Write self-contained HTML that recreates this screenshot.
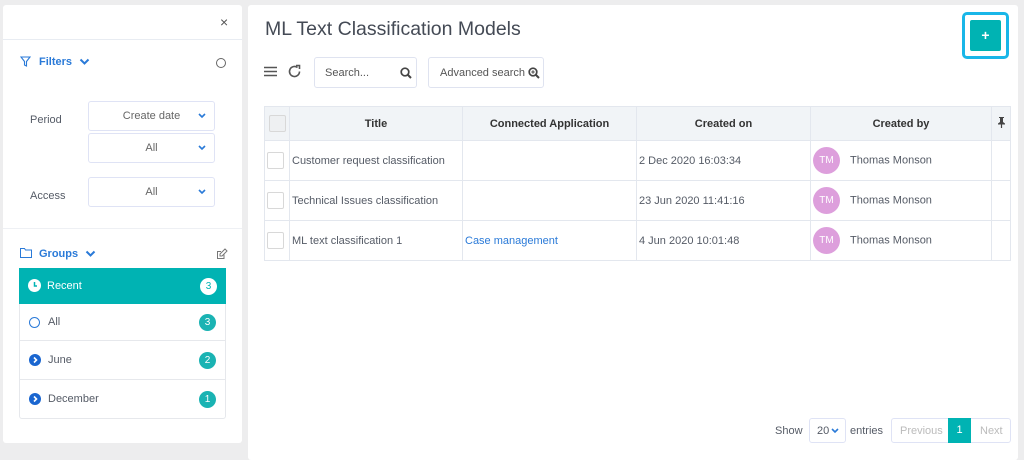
<!DOCTYPE html>
<html><head><style>
*{box-sizing:border-box;margin:0;padding:0}
body{width:1024px;height:455px;background:#ededee;font-family:"Liberation Sans",sans-serif;font-size:11px;color:#555b66;position:relative;overflow:hidden}
.a{position:absolute}
.side{left:3px;top:5px;width:239px;height:438px;background:#fff;border-radius:3px}
.main{left:248px;top:5px;width:770px;height:455px;background:#fff;border-radius:3px}
.sel{position:absolute;border:1px solid #dfe3f5;border-radius:3px;text-align:center;line-height:29px;color:#666}
.chev{position:absolute;right:8px;top:11px}
.blue{color:#2a7ad8;font-weight:bold}
.li{position:absolute;left:19px;width:207px;border:1px solid #e6e8ec;border-top:none;font-size:11px}
.badge{position:absolute;right:9px;width:17px;height:17px;border-radius:50%;background:#1ab3b3;color:#fff;text-align:center;line-height:17px;font-size:10px}
table{position:absolute;left:264px;top:106px;border-collapse:collapse;font-size:11px}
td,th{border:1px solid #e3e7ee;height:40px;padding:0 2px}
th{background:#f1f4f7;height:34px;color:#333;font-weight:bold}
.cb{display:inline-block;width:17px;height:17px;border:1px solid #d8d8d8;border-radius:2px;vertical-align:middle;background:#fff}
.av{display:inline-block;width:27px;height:27px;border-radius:50%;background:#dd9fdc;color:#fff;text-align:center;line-height:28px;font-size:10px;vertical-align:middle;margin-right:10px}
</style></head><body>
<div class="a side"></div>
<div class="a main"></div>
<div class="a" style="left:3px;top:39px;width:239px;border-top:1px solid #e8ecf2"></div>
<div class="a" style="left:220px;top:14px;font-size:14px;color:#555">×</div>
<svg class="a" style="left:20px;top:56px" width="11" height="11" viewBox="0 0 11 11"><path d="M1 1h9L6.5 5.5V10L4.5 9V5.5Z" fill="none" stroke="#2a7ad8" stroke-width="1.1"/></svg>
<div class="a blue" style="left:39px;top:56px">Filters</div>
<svg class="a" style="left:79px;top:58px" width="11" height="8"><path d="M1.5 1.5l4 4 4-4" fill="none" stroke="#2a7ad8" stroke-width="2"/></svg>
<div class="a" style="left:216px;top:58px;width:10px;height:10px;border:1px solid #666;border-radius:50%"></div>
<div class="a" style="left:30px;top:114px">Period</div>
<div class="sel" style="left:88px;top:101px;width:127px;height:30px">Create date<svg class="chev" width="8" height="6"><path d="M1 1l3 3 3-3" fill="none" stroke="#2a7ad8" stroke-width="1.6"/></svg></div>
<div class="sel" style="left:88px;top:133px;width:127px;height:30px">All<svg class="chev" width="8" height="6"><path d="M1 1l3 3 3-3" fill="none" stroke="#2a7ad8" stroke-width="1.6"/></svg></div>
<div class="a" style="left:30px;top:190px">Access</div>
<div class="sel" style="left:88px;top:177px;width:127px;height:30px">All<svg class="chev" width="8" height="6"><path d="M1 1l3 3 3-3" fill="none" stroke="#2a7ad8" stroke-width="1.6"/></svg></div>
<div class="a" style="left:3px;top:228px;width:239px;border-top:1px solid #eef0f4"></div>
<svg class="a" style="left:20px;top:248px" width="12" height="10"><path d="M.5 .5h4l1 1.5h6v7.5H.5Z" fill="none" stroke="#2a7ad8"/></svg>
<div class="a blue" style="left:39px;top:248px">Groups</div>
<svg class="a" style="left:85px;top:250px" width="11" height="8"><path d="M1.5 1.5l4 4 4-4" fill="none" stroke="#2a7ad8" stroke-width="2"/></svg>
<svg class="a" style="left:216px;top:248px" width="12" height="12"><path d="M9 1l2 2-5 5H4V6Z M8 6.5V10.5H1.5V3.5H5" fill="none" stroke="#777"/></svg>
<div class="li" style="top:268px;height:36px;background:#00b3b3;border:none;color:#fff"><span class="a" style="left:9px;top:11px;width:13px;height:13px;border-radius:50%;background:#fff"></span><svg class="a" style="left:9px;top:11px" width="13" height="13"><path d="M6.5 3v4h2.5" stroke="#00b3b3" stroke-width="1.5" fill="none"/></svg><span class="a" style="left:28px;top:12px">Recent</span><span class="badge" style="top:10px;background:#fff;color:#00b3b3">3</span></div>
<div class="li" style="top:304px;height:37px"><span class="a" style="left:9px;top:13px;width:11px;height:11px;border:1.5px solid #2a7ad8;border-radius:50%"></span><span class="a" style="left:28px;top:12px">All</span><span class="badge" style="top:10px">3</span></div>
<div class="li" style="top:341px;height:39px"><svg class="a" style="left:9px;top:13px" width="12" height="12"><circle cx="6" cy="6" r="6" fill="#1a66d0"/><path d="M5 3.5l2.5 2.5L5 8.5" fill="none" stroke="#fff" stroke-width="1.6"/></svg><span class="a" style="left:28px;top:13px">June</span><span class="badge" style="top:11px">2</span></div>
<div class="li" style="top:380px;height:39px;border-radius:0 0 3px 3px"><svg class="a" style="left:9px;top:13px" width="12" height="12"><circle cx="6" cy="6" r="6" fill="#1a66d0"/><path d="M5 3.5l2.5 2.5L5 8.5" fill="none" stroke="#fff" stroke-width="1.6"/></svg><span class="a" style="left:28px;top:13px">December</span><span class="badge" style="top:11px">1</span></div>

<div class="a" style="left:265px;top:18px;font-size:19.5px;color:#444a55">ML Text Classification Models</div>
<div class="a" style="left:962px;top:12px;width:47px;height:47px;border:3px solid #19b6e8;border-radius:5px"></div>
<div class="a" style="left:970px;top:20px;width:31px;height:31px;background:#00b3b3;border-radius:2px;color:#fff;text-align:center;line-height:31px;font-weight:bold;font-size:14px">+</div>
<svg class="a" style="left:264px;top:66px" width="13" height="11"><path d="M0 1.5h13M0 5.5h13M0 9.5h13" stroke="#555" stroke-width="1.6"/></svg>
<svg class="a" style="left:287px;top:64px" width="15" height="15"><path d="M12.5 7.5A5 5 0 1 1 10.5 3.5" fill="none" stroke="#555" stroke-width="1.6"/><path d="M9 1.5h3.5V5" fill="none" stroke="#555" stroke-width="1.6"/></svg>
<div class="a" style="left:314px;top:57px;width:103px;height:31px;border:1px solid #dfe3f0;border-radius:3px"><span class="a" style="left:10px;top:9px;color:#555">Search...</span><svg class="a" style="left:85px;top:9px" width="12" height="12"><circle cx="5" cy="5" r="3.8" fill="none" stroke="#444" stroke-width="1.7"/><path d="M8 8l3 3" stroke="#444" stroke-width="2"/></svg></div>
<div class="a" style="left:428px;top:57px;width:116px;height:31px;border:1px solid #dfe3f0;border-radius:3px"><span class="a" style="left:11px;top:9px;color:#555">Advanced search</span><svg class="a" style="left:99px;top:9px" width="12" height="12"><circle cx="5" cy="5" r="3.8" fill="none" stroke="#444" stroke-width="1.7"/><path d="M8 8l3 3" stroke="#444" stroke-width="2"/><path d="M3.3 5h3.4M5 3.3v3.4" stroke="#444"/></svg></div>

<table>
<tr><th style="width:25px"><span class="cb" style="background:#eef0f2"></span></th><th style="width:173px">Title</th><th style="width:174px">Connected Application</th><th style="width:174px">Created on</th><th style="width:181px">Created by</th><th style="width:19px"><svg width="9" height="11"><path d="M2 0h5v1H6v4l2 1.5v1H1v-1L3 5V1H2Z" fill="#444"/><path d="M4.5 7.5V11" stroke="#444" stroke-width="1.2"/></svg></th></tr>
<tr><td><span class="cb"></span></td><td>Customer request classification</td><td></td><td>2 Dec 2020 16:03:34</td><td><span class="av">TM</span>Thomas Monson</td><td></td></tr>
<tr><td><span class="cb"></span></td><td>Technical Issues classification</td><td></td><td>23 Jun 2020 11:41:16</td><td><span class="av">TM</span>Thomas Monson</td><td></td></tr>
<tr><td><span class="cb"></span></td><td>ML text classification 1</td><td style="color:#2a7ad8">Case management</td><td>4 Jun 2020 10:01:48</td><td><span class="av">TM</span>Thomas Monson</td><td></td></tr>
</table>

<div class="a" style="left:775px;top:425px">Show</div>
<div class="a" style="left:809px;top:418px;width:37px;height:25px;border:1px solid #dfe3f5;border-radius:3px;line-height:24px;padding-left:7px">20<svg style="margin-left:2px" width="8" height="6"><path d="M1 1l3 3 3-3" fill="none" stroke="#2a7ad8" stroke-width="1.6"/></svg></div>
<div class="a" style="left:850px;top:425px">entries</div>
<div class="a" style="left:891px;top:418px;width:120px;height:25px;border:1px solid #dfe3f5;border-radius:3px"></div>
<div class="a" style="left:900px;top:425px;color:#bbb">Previous</div>
<div class="a" style="left:948px;top:418px;width:23px;height:25px;background:#00b3b3;color:#fff;text-align:center;line-height:25px">1</div>
<div class="a" style="left:980px;top:425px;color:#bbb">Next</div>
</body></html>
